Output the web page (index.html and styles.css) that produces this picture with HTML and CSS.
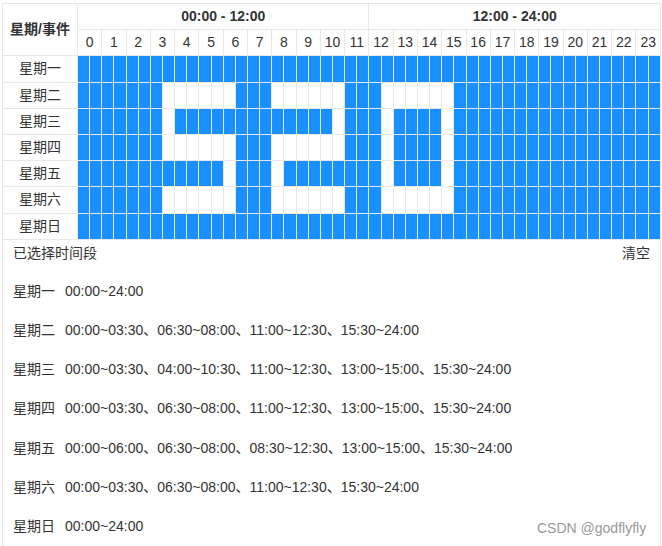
FILE: index.html
```
<!DOCTYPE html>
<html lang="zh-CN">
<head>
<meta charset="utf-8">
<title>weektime</title>
<link rel="stylesheet" href="styles.css">
</head>
<body>
<div class="page">
<table class="wt">
<colgroup><col class="col-week"><col span="48"></colgroup>
<thead>
<tr>
<th class="head-main" rowspan="2">星期/事件</th>
<th class="head-main" colspan="24">00:00 - 12:00</th>
<th class="head-main" colspan="24">12:00 - 24:00</th>
</tr>
<tr>
<th colspan="2">0</th><th colspan="2">1</th><th colspan="2">2</th><th colspan="2">3</th><th colspan="2">4</th><th colspan="2">5</th><th colspan="2">6</th><th colspan="2">7</th><th colspan="2">8</th><th colspan="2">9</th><th colspan="2">10</th><th colspan="2">11</th><th colspan="2">12</th><th colspan="2">13</th><th colspan="2">14</th><th colspan="2">15</th><th colspan="2">16</th><th colspan="2">17</th><th colspan="2">18</th><th colspan="2">19</th><th colspan="2">20</th><th colspan="2">21</th><th colspan="2">22</th><th colspan="2">23</th>
</tr>
</thead>
<tbody>
<tr>
<td class="day">星期一</td>
<td class="s"></td><td class="s"></td><td class="s"></td><td class="s"></td><td class="s"></td><td class="s"></td><td class="s"></td><td class="s"></td><td class="s"></td><td class="s"></td><td class="s"></td><td class="s"></td>
<td class="s"></td><td class="s"></td><td class="s"></td><td class="s"></td><td class="s"></td><td class="s"></td><td class="s"></td><td class="s"></td><td class="s"></td><td class="s"></td><td class="s"></td><td class="s"></td>
<td class="s"></td><td class="s"></td><td class="s"></td><td class="s"></td><td class="s"></td><td class="s"></td><td class="s"></td><td class="s"></td><td class="s"></td><td class="s"></td><td class="s"></td><td class="s"></td>
<td class="s"></td><td class="s"></td><td class="s"></td><td class="s"></td><td class="s"></td><td class="s"></td><td class="s"></td><td class="s"></td><td class="s"></td><td class="s"></td><td class="s"></td><td class="s"></td>
</tr>
<tr>
<td class="day">星期二</td>
<td class="s"></td><td class="s"></td><td class="s"></td><td class="s"></td><td class="s"></td><td class="s"></td><td class="s"></td>
<td></td><td></td><td></td><td></td><td></td><td></td>
<td class="s"></td><td class="s"></td><td class="s"></td>
<td></td><td></td><td></td><td></td><td></td><td></td>
<td class="s"></td><td class="s"></td><td class="s"></td>
<td></td><td></td><td></td><td></td><td></td><td></td>
<td class="s"></td><td class="s"></td><td class="s"></td><td class="s"></td><td class="s"></td><td class="s"></td><td class="s"></td><td class="s"></td><td class="s"></td><td class="s"></td><td class="s"></td><td class="s"></td><td class="s"></td><td class="s"></td><td class="s"></td><td class="s"></td><td class="s"></td>
</tr>
<tr>
<td class="day">星期三</td>
<td class="s"></td><td class="s"></td><td class="s"></td><td class="s"></td><td class="s"></td><td class="s"></td><td class="s"></td>
<td></td>
<td class="s"></td><td class="s"></td><td class="s"></td><td class="s"></td><td class="s"></td><td class="s"></td><td class="s"></td><td class="s"></td><td class="s"></td><td class="s"></td><td class="s"></td><td class="s"></td><td class="s"></td>
<td></td>
<td class="s"></td><td class="s"></td><td class="s"></td>
<td></td>
<td class="s"></td><td class="s"></td><td class="s"></td><td class="s"></td>
<td></td>
<td class="s"></td><td class="s"></td><td class="s"></td><td class="s"></td><td class="s"></td><td class="s"></td><td class="s"></td><td class="s"></td><td class="s"></td><td class="s"></td><td class="s"></td><td class="s"></td><td class="s"></td><td class="s"></td><td class="s"></td><td class="s"></td><td class="s"></td>
</tr>
<tr>
<td class="day">星期四</td>
<td class="s"></td><td class="s"></td><td class="s"></td><td class="s"></td><td class="s"></td><td class="s"></td><td class="s"></td>
<td></td><td></td><td></td><td></td><td></td><td></td>
<td class="s"></td><td class="s"></td><td class="s"></td>
<td></td><td></td><td></td><td></td><td></td><td></td>
<td class="s"></td><td class="s"></td><td class="s"></td>
<td></td>
<td class="s"></td><td class="s"></td><td class="s"></td><td class="s"></td>
<td></td>
<td class="s"></td><td class="s"></td><td class="s"></td><td class="s"></td><td class="s"></td><td class="s"></td><td class="s"></td><td class="s"></td><td class="s"></td><td class="s"></td><td class="s"></td><td class="s"></td><td class="s"></td><td class="s"></td><td class="s"></td><td class="s"></td><td class="s"></td>
</tr>
<tr>
<td class="day">星期五</td>
<td class="s"></td><td class="s"></td><td class="s"></td><td class="s"></td><td class="s"></td><td class="s"></td><td class="s"></td><td class="s"></td><td class="s"></td><td class="s"></td><td class="s"></td><td class="s"></td>
<td></td>
<td class="s"></td><td class="s"></td><td class="s"></td>
<td></td>
<td class="s"></td><td class="s"></td><td class="s"></td><td class="s"></td><td class="s"></td><td class="s"></td><td class="s"></td><td class="s"></td>
<td></td>
<td class="s"></td><td class="s"></td><td class="s"></td><td class="s"></td>
<td></td>
<td class="s"></td><td class="s"></td><td class="s"></td><td class="s"></td><td class="s"></td><td class="s"></td><td class="s"></td><td class="s"></td><td class="s"></td><td class="s"></td><td class="s"></td><td class="s"></td><td class="s"></td><td class="s"></td><td class="s"></td><td class="s"></td><td class="s"></td>
</tr>
<tr>
<td class="day">星期六</td>
<td class="s"></td><td class="s"></td><td class="s"></td><td class="s"></td><td class="s"></td><td class="s"></td><td class="s"></td>
<td></td><td></td><td></td><td></td><td></td><td></td>
<td class="s"></td><td class="s"></td><td class="s"></td>
<td></td><td></td><td></td><td></td><td></td><td></td>
<td class="s"></td><td class="s"></td><td class="s"></td>
<td></td><td></td><td></td><td></td><td></td><td></td>
<td class="s"></td><td class="s"></td><td class="s"></td><td class="s"></td><td class="s"></td><td class="s"></td><td class="s"></td><td class="s"></td><td class="s"></td><td class="s"></td><td class="s"></td><td class="s"></td><td class="s"></td><td class="s"></td><td class="s"></td><td class="s"></td><td class="s"></td>
</tr>
<tr>
<td class="day">星期日</td>
<td class="s"></td><td class="s"></td><td class="s"></td><td class="s"></td><td class="s"></td><td class="s"></td><td class="s"></td><td class="s"></td><td class="s"></td><td class="s"></td><td class="s"></td><td class="s"></td>
<td class="s"></td><td class="s"></td><td class="s"></td><td class="s"></td><td class="s"></td><td class="s"></td><td class="s"></td><td class="s"></td><td class="s"></td><td class="s"></td><td class="s"></td><td class="s"></td>
<td class="s"></td><td class="s"></td><td class="s"></td><td class="s"></td><td class="s"></td><td class="s"></td><td class="s"></td><td class="s"></td><td class="s"></td><td class="s"></td><td class="s"></td><td class="s"></td>
<td class="s"></td><td class="s"></td><td class="s"></td><td class="s"></td><td class="s"></td><td class="s"></td><td class="s"></td><td class="s"></td><td class="s"></td><td class="s"></td><td class="s"></td><td class="s"></td>
</tr>
<tr>
<td class="preview" colspan="49">
<div class="con"><span>已选择时间段</span><a class="clear">清空</a></div>
<div class="times">
<p><span class="tip">星期一</span><span>00:00~24:00</span></p>
<p><span class="tip">星期二</span><span>00:00~03:30、06:30~08:00、11:00~12:30、15:30~24:00</span></p>
<p><span class="tip">星期三</span><span>00:00~03:30、04:00~10:30、11:00~12:30、13:00~15:00、15:30~24:00</span></p>
<p><span class="tip">星期四</span><span>00:00~03:30、06:30~08:00、11:00~12:30、13:00~15:00、15:30~24:00</span></p>
<p><span class="tip">星期五</span><span>00:00~06:00、06:30~08:00、08:30~12:30、13:00~15:00、15:30~24:00</span></p>
<p><span class="tip">星期六</span><span>00:00~03:30、06:30~08:00、11:00~12:30、15:30~24:00</span></p>
<p><span class="tip">星期日</span><span>00:00~24:00</span></p>
</div>
</td>
</tr>
</tbody>
</table>
<div class="watermark">CSDN @godflyfly</div>
</div>
</body>
</html>
```

FILE: styles.css
```
html, body {
  margin: 0;
  padding: 0;
  background: #fff;
}
body {
  font-family: "Liberation Sans", "Noto Sans CJK SC", sans-serif;
  color: #333;
  overflow: hidden;
}
.page {
  position: relative;
  padding: 3px 0 0 2px;
}
.wt {
  border-collapse: collapse;
  table-layout: fixed;
  width: 659px;
  font-size: 14px;
}
.col-week {
  width: 75px;
}
.wt th,
.wt td {
  border: 1px solid #e8e8e8;
  padding: 0;
  text-align: center;
  line-height: 25.2px;
  font-weight: normal;
}
.wt th.head-main {
  font-weight: bold;
}
.wt td.s {
  background: #1890ff;
}
.wt td.preview {
  text-align: left;
  padding: 0 10px 20px 10px;
  line-height: normal;
}
.con {
  display: flex;
  justify-content: space-between;
  line-height: 26px;
}
.clear {
  color: #333;
  cursor: pointer;
}
.times {
  padding-top: 6px;
}
.times p {
  margin: 0;
  line-height: 39.2px;
}
.tip {
  margin-right: 10px;
}
.watermark {
  position: absolute;
  left: 537px;
  top: 520px;
  font-size: 14px;
  line-height: 17px;
  color: #999;
}
```
